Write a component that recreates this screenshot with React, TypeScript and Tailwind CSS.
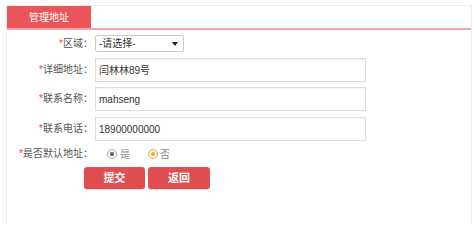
import React from "react";

const font = { fontFamily: '"Liberation Sans", "Noto Sans CJK SC", sans-serif' };

function Label({ text }: { text: string }) {
  return (
    <div className="w-[86px] shrink-0 text-right text-[10px] leading-none text-[#555]">
      <span className="text-[#e8404a]">*</span>
      {text}：
    </div>
  );
}

function Input({ value }: { value: string }) {
  return (
    <div className="ml-[2px] flex h-[24px] w-[271px] items-center border border-[#ddd] bg-white pl-[3px] text-[10px] text-[#333] shadow-[inset_0_1px_1px_rgba(0,0,0,0.04)]">
      {value}
    </div>
  );
}

export default function App() {
  return (
    <div className="h-[223px] w-[474px] overflow-hidden bg-white" style={font}>
      <div className="ml-[6px] mt-[5px] h-[230px] w-[466px] border border-b-0 border-[#ececec]">
        <div className="flex h-[24px] items-end border-b-2 border-[#f3a4ab]">
          <div className="flex h-[22px] w-[84px] items-center justify-center bg-[#e8555b] text-[10px] text-white">
            管理地址
          </div>
        </div>
        <div className="flex flex-col pt-[5px]">
          <div className="flex h-[17px] items-center">
            <Label text="区域" />
            <div className="ml-[2px] flex h-[17px] w-[89px] items-center justify-between rounded-[2px] border border-[#ccc] bg-white pl-[3px] pr-[5px] text-[10px] text-[#333]">
              <span>-请选择-</span>
              <svg width="6" height="4" viewBox="0 0 6 4">
                <path d="M0 0 L6 0 L3 4 Z" fill="#222" />
              </svg>
            </div>
          </div>
          <div className="mt-[6px] flex items-center">
            <Label text="详细地址" />
            <Input value="闫林林89号" />
          </div>
          <div className="mt-[5px] flex items-center">
            <Label text="联系名称" />
            <Input value="mahseng" />
          </div>
          <div className="mt-[6px] flex items-center">
            <Label text="联系电话" />
            <Input value="18900000000" />
          </div>
          <div className="mt-[5px] flex h-[16px] items-center">
            <Label text="是否默认地址" />
            <div className="ml-[14px] flex items-center text-[10px] text-[#888]">
              <span className="flex h-[10px] w-[10px] items-center justify-center rounded-full border border-[#aaa] bg-white">
                <span className="h-[4px] w-[4px] rounded-full bg-[#555]" />
              </span>
              <span className="ml-[3px]">是</span>
              <span className="ml-[18px] flex h-[10px] w-[10px] items-center justify-center rounded-full border border-[#f2a53a] bg-[#fff6e8]">
                <span className="h-[4px] w-[4px] rounded-full bg-[#f2a53a]" />
              </span>
              <span className="ml-[2px]">否</span>
            </div>
          </div>
          <div className="mt-[5px] flex pl-[77px]">
            <button className="flex h-[22px] w-[61px] items-center justify-center rounded-[3px] bg-[#e04e52] text-[11px] font-bold text-white shadow-[0_1px_1px_rgba(0,0,0,0.15)]">
              提交
            </button>
            <button className="ml-[3px] flex h-[22px] w-[62px] items-center justify-center rounded-[3px] bg-[#e04e52] text-[11px] font-bold text-white shadow-[0_1px_1px_rgba(0,0,0,0.15)]">
              返回
            </button>
          </div>
        </div>
      </div>
    </div>
  );
}
